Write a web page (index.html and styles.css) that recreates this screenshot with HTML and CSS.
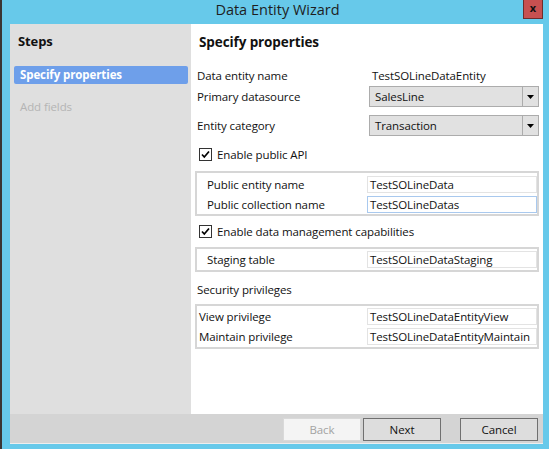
FILE: index.html
```html
<!DOCTYPE html>
<html>
<head>
<meta charset="utf-8">
<link rel="stylesheet" href="styles.css">
</head>
<body>
<div class="window">
  <div class="titlebar">
    <div class="title">Data Entity Wizard</div>
    <div class="close">x</div>
  </div>
  <div class="client">
    <div class="body">
      <div class="sidebar">
        <div class="steps-head">Steps</div>
        <div class="step active">Specify properties</div>
        <div class="step disabled">Add fields</div>
      </div>
      <div class="main">
        <div class="heading">Specify properties</div>
        <div class="row r1"><span class="label">Data entity name</span><span class="value">TestSOLineDataEntity</span></div>
        <div class="row r2"><span class="label">Primary datasource</span>
          <div class="combo"><span class="combo-text">SalesLine</span><span class="combo-btn"><svg width="7" height="4" viewBox="0 0 7 4"><path d="M0 0H7L3.5 4Z" fill="#000"/></svg></span></div>
        </div>
        <div class="row r3"><span class="label">Entity category</span>
          <div class="combo"><span class="combo-text">Transaction</span><span class="combo-btn"><svg width="7" height="4" viewBox="0 0 7 4"><path d="M0 0H7L3.5 4Z" fill="#000"/></svg></span></div>
        </div>
        <div class="check c1"><span class="box"><svg width="11" height="11" viewBox="0 0 11 11"><path d="M2 5.5L4.3 8L9 2.5" fill="none" stroke="#000" stroke-width="1.7"/></svg></span><span>Enable public API</span></div>
        <div class="group g1">
          <div class="grow"><span class="glabel">Public entity name</span><span class="tb">TestSOLineData</span></div>
          <div class="grow"><span class="glabel">Public collection name</span><span class="tb focus">TestSOLineDatas</span></div>
        </div>
        <div class="check c2"><span class="box"><svg width="11" height="11" viewBox="0 0 11 11"><path d="M2 5.5L4.3 8L9 2.5" fill="none" stroke="#000" stroke-width="1.7"/></svg></span><span>Enable data management capabilities</span></div>
        <div class="group g2">
          <div class="grow"><span class="glabel">Staging table</span><span class="tb">TestSOLineDataStaging</span></div>
        </div>
        <div class="row sec">Security privileges</div>
        <div class="group g3">
          <div class="grow"><span class="glabel">View privilege</span><span class="tb">TestSOLineDataEntityView</span></div>
          <div class="grow"><span class="glabel">Maintain privilege</span><span class="tb">TestSOLineDataEntityMaintain</span></div>
        </div>
      </div>
    </div>
    <div class="buttonbar">
      <div class="btn disabled">Back</div>
      <div class="btn next">Next</div>
      <div class="btn cancel">Cancel</div>
    </div>
  </div>
</div>
</body>
</html>
```

FILE: styles.css
```css
* { box-sizing: border-box; }
html, body { margin: 0; padding: 0; }
body {
  font-family: "Open Sans", "Noto Sans", "Liberation Sans", sans-serif;
  font-size: 11.5px;
  letter-spacing: -0.1px;
  color: #111;
  background: #67c9ea;
}
.window {
  width: 549px;
  height: 449px;
  background: #67c9ea;
  border-left: 2px solid #3b3533;
  overflow: hidden;
}
.titlebar {
  height: 24px;
  display: flex;
  align-items: flex-start;
}
.title {
  flex: 1;
  text-align: center;
  font-size: 14.5px;
  letter-spacing: 0;
  line-height: 20px;
  color: #1e1e1e;
  padding-left: 30px;
}
.close {
  width: 20px;
  height: 19px;
  margin-right: 6px;
  background: #c75050;
  border: 1px solid #6e2c2c;
  border-top: none;
  color: #111;
  font-weight: bold;
  font-size: 11px;
  line-height: 15px;
  text-align: center;
}
.client {
  margin-left: 8px;
  width: 533px;
  height: 420px;
  display: flex;
  flex-direction: column;
  border-bottom: 1px solid #eeeeee;
}
.body {
  height: 390px;
  display: flex;
}
.sidebar {
  width: 181px;
  background: #dfdfdf;
  padding-left: 4px;
}
.steps-head {
  font-weight: bold;
  font-size: 13px;
  line-height: 20px;
  margin-top: 7px;
  padding-left: 4px;
}
.step {
  width: 174px;
  height: 18px;
  line-height: 18px;
  padding-left: 6px;
}
.step.active {
  margin-top: 15px;
  background: #6e9fea;
  border-radius: 2px;
  color: #fff;
  font-weight: bold;
}
.step.disabled {
  margin-top: 14px;
  color: #b4b4b4;
}
.main {
  flex: 1;
  background: #fff;
  padding-left: 6px;
}
.heading {
  font-weight: bold;
  font-size: 13.5px;
  height: 20px;
  line-height: 20px;
  margin-top: 8px;
  padding-left: 2px;
}
.row {
  display: flex;
  align-items: center;
}
.label { width: 172px; }
.value { padding-left: 3px; }
.r1 { height: 20px; margin-top: 13px; }
.r2 { height: 21px; margin-top: 1px; }
.r3 { height: 21px; margin-top: 8px; }
.combo {
  width: 170px;
  height: 21px;
  border: 1px solid #acacac;
  background: #e1e1e1;
  display: flex;
}
.combo-text {
  flex: 1;
  padding-left: 5px;
  line-height: 19px;
}
.combo-btn {
  width: 16px;
  border-left: 1px solid #acacac;
  display: flex;
  align-items: center;
  justify-content: center;
}
.check {
  display: flex;
  align-items: center;
  height: 18px;
  padding-left: 2px;
}
.c1 { margin-top: 9px; }
.c2 { margin-top: 6px; }
.box {
  width: 13px;
  height: 13px;
  border: 1px solid #333;
  background: #fff;
  margin-right: 5px;
  display: flex;
  align-items: center;
  justify-content: center;
}
.group {
  width: 344px;
  margin-left: -2px;
  border: 2px solid #d6d6d6;
  display: flex;
  flex-direction: column;
  gap: 3px;
}
.g1 { margin-top: 8px; padding: 3px 0 1px 10px; }
.g2 { margin-top: 7px; padding: 2px 0 2px 10px; }
.g3 { margin-top: 6px; padding: 2px 0 2px 2px; }
.sec { height: 18px; margin-top: 8px; }
.grow {
  display: flex;
  align-items: center;
  height: 17px;
}
.glabel { flex: 1; }
.tb {
  width: 170px;
  height: 17px;
  border: 1px solid #e3e3e3;
  line-height: 15px;
  padding-left: 2px;
  white-space: nowrap;
  overflow: hidden;
}
.tb.focus { border-color: #a9c9ee; }
.buttonbar {
  height: 29px;
  background: #d4d4d4;
  display: flex;
  justify-content: flex-end;
  align-items: flex-start;
  padding-top: 4px;
  padding-right: 5px;
}
.btn {
  width: 78px;
  height: 23px;
  border: 1px solid #707070;
  background: #dddddd;
  text-align: center;
  line-height: 21px;
  color: #111;
}
.btn.disabled {
  background: #f4f4f4;
  border-color: #d9d9d9;
  color: #a3a3a3;
  margin-right: 2px;
}
.btn.next { margin-right: 19px; }
```
